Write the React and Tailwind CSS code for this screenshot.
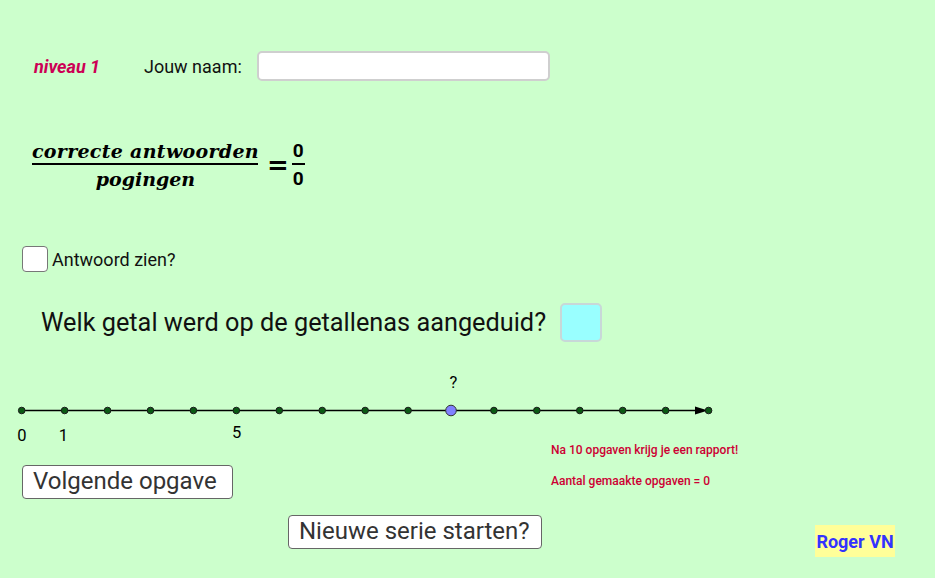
const STEP = 42.93;
const X0 = 21.7;

function NumberLine() {
  const dots = [];
  for (let i = 0; i <= 16; i++) {
    if (i === 10) continue;
    dots.push(X0 + STEP * i);
  }
  return (
    <svg width="935" height="78" viewBox="0 0 935 78" className="block">
      <line x1={X0} y1="40.5" x2="700" y2="40.5" stroke="#000" strokeWidth="1.5" />
      <polygon points="695,36.5 708,40.5 695,44.5" fill="#000" />
      {dots.map((x) => (
        <circle key={x} cx={x} cy="40.5" r="3.3" fill="#0b5a14" stroke="#1a1a1a" strokeWidth="1" />
      ))}
      <circle cx={X0 + STEP * 10} cy="40.5" r="5.3" fill="#8080ff" stroke="#333" strokeWidth="1" />
      <text x="453.5" y="18" textAnchor="middle" fontSize="16.5" fill="#000" style={{ fontFamily: 'Roboto, sans-serif' }}>?</text>
      <text x="22" y="71" textAnchor="middle" fontSize="16.5" fill="#000" style={{ fontFamily: 'Roboto, sans-serif' }}>0</text>
      <text x="63.5" y="71" textAnchor="middle" fontSize="16.5" fill="#000" style={{ fontFamily: 'Roboto, sans-serif' }}>1</text>
      <text x="236.7" y="68" textAnchor="middle" fontSize="16.5" fill="#000" style={{ fontFamily: 'Roboto, sans-serif' }}>5</text>
    </svg>
  );
}

export default function App() {
  return (
    <div className="w-[935px] h-[578px] overflow-hidden bg-[#ccffcc] font-['Roboto',sans-serif] text-black">
      {/* niveau + naam */}
      <div className="flex items-center h-[30px] mt-[51px] pl-[34px]">
        <span className="text-[18px] font-bold italic text-[#cc0055] w-[110px]">niveau 1</span>
        <span className="text-[18px] text-[#111] w-[113px]">Jouw naam:</span>
        <input
          type="text"
          className="w-[293px] h-[30px] bg-white border-2 border-[#cfcfcf] rounded-[5px] outline-none"
        />
      </div>

      {/* breuk */}
      <div className="flex items-center mt-[58px] pl-[32px] h-[54px] font-['DejaVu_Serif',serif] font-bold italic">
        <div className="flex flex-col items-center">
          <span className="text-[19px] leading-[24px] tracking-[0.3px]">correcte antwoorden</span>
          <span className="w-[226px] h-[1.5px] bg-black" />
          <span className="text-[19px] leading-[28px]">pogingen</span>
        </div>
        <span className="ml-[8px] text-[26px] not-italic font-['DejaVu_Sans',sans-serif] leading-none mb-[2px]">=</span>
        <div className="ml-[3px] flex flex-col items-center not-italic font-['Roboto',sans-serif]">
          <span className="text-[19px] leading-[24px]">0</span>
          <span className="w-[13px] h-[1.5px] bg-black" />
          <span className="text-[19px] leading-[28px]">0</span>
        </div>
      </div>

      {/* antwoord zien */}
      <div className="flex items-center mt-[53px] pl-[22px] h-[26px]">
        <span className="w-[26px] h-[26px] bg-white border border-[#777] rounded-[4px]" />
        <span className="ml-[4px] text-[18px] text-[#111]">Antwoord zien?</span>
      </div>

      {/* vraag */}
      <div className="flex items-center mt-[31px] pl-[41px] h-[39px]">
        <span className="text-[25.3px] text-[#111]">Welk getal werd op de getallenas aangeduid?</span>
        <span className="ml-[14px] w-[42px] h-[39px] bg-[#99ffff] border-2 border-[#c8d8d8] rounded-[5px]" />
      </div>

      {/* getallenas */}
      <div className="mt-[28px]">
        <NumberLine />
      </div>

      {/* volgende + meldingen */}
      <div className="flex">
        <div className="w-[551px] pl-[22px] pt-[17px]">
          <button className="w-[211px] h-[34px] bg-white border-[1.5px] border-[#666] rounded-[4px] text-[24px] text-[#333] text-left pl-[10px] leading-none pb-[2px]">
            Volgende opgave
          </button>
        </div>
        <div className="-mt-[5px] text-[12px] font-medium text-[#cc0033]">
          <div className="leading-[14px]">Na 10 opgaven krijg je een rapport!</div>
          <div className="leading-[14px] mt-[17px]">Aantal gemaakte opgaven = 0</div>
        </div>
      </div>

      {/* nieuwe serie + naam */}
      <div className="flex items-start mt-[16px] pl-[288px]">
        <button className="w-[254px] h-[34px] bg-white border-[1.5px] border-[#666] rounded-[4px] text-[24px] text-[#333] text-left pl-[10px] leading-none pb-[2px]">
          Nieuwe serie starten?
        </button>
        <div className="ml-[273px] mt-[10px] w-[80px] h-[32px] bg-[#ffff99] flex items-center justify-center text-[18px] font-bold text-[#3333ff]">
          Roger VN
        </div>
      </div>
    </div>
  );
}
